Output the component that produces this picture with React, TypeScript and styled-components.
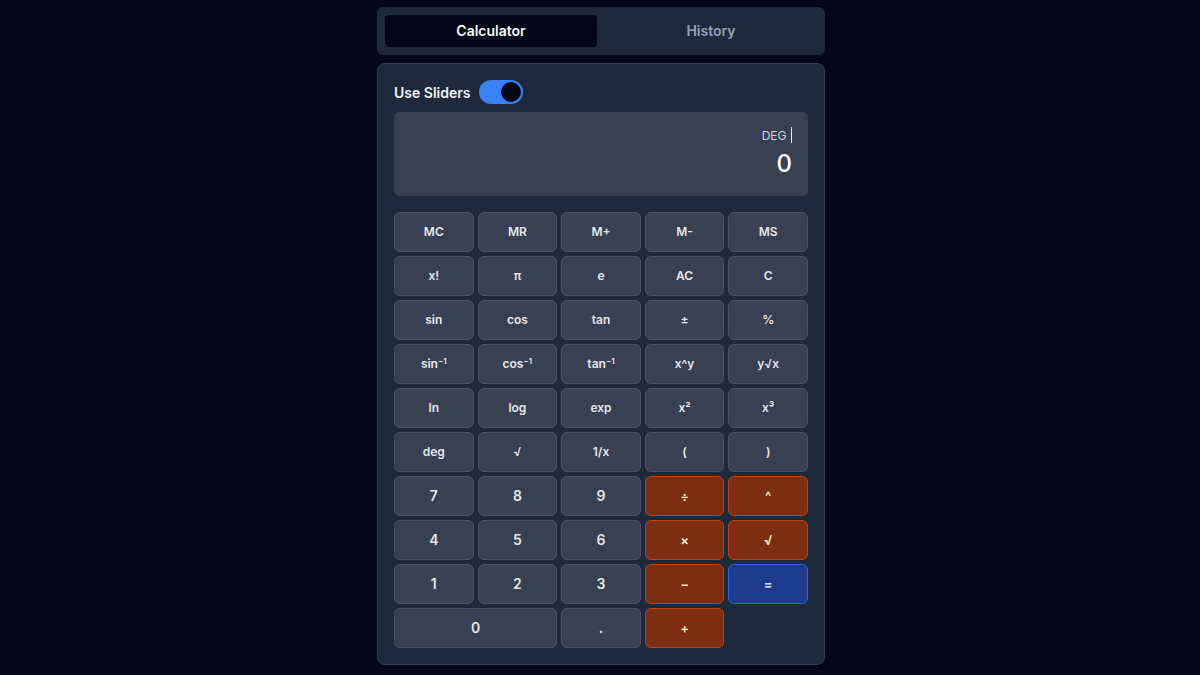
import React, { useState } from "react";
import styled, { createGlobalStyle, css } from "styled-components";

const GlobalStyle = createGlobalStyle`
  html, body {
    margin: 0;
    padding: 0;
    background: #020817;
    font-family: Inter, "Noto Sans", "Liberation Sans", sans-serif;
    color: #f8fafc;
  }
  * {
    box-sizing: border-box;
  }
`;

const Page = styled.div`
  min-height: 675px;
  display: flex;
  justify-content: center;
  padding: 7px 0 0 2px;
`;

const Column = styled.div`
  width: 448px;
  display: flex;
  flex-direction: column;
  gap: 8px;
`;

const TabList = styled.div`
  display: grid;
  grid-template-columns: 1fr 1fr;
  gap: 8px;
  padding: 8px;
  height: 48px;
  background: #1e293b;
  border-radius: 6px;
`;

const Tab = styled.button<{ $active?: boolean }>`
  border: none;
  border-radius: 4px;
  padding: 0 0 2px;
  font-family: inherit;
  font-size: 14px;
  font-weight: 600;
  cursor: pointer;
  background: ${(p) => (p.$active ? "#020817" : "transparent")};
  color: ${(p) => (p.$active ? "#f8fafc" : "#94a3b8")};
`;

const Card = styled.div`
  background: #1e293b;
  border: 1px solid #334155;
  border-radius: 8px;
  padding: 16px;
  display: flex;
  flex-direction: column;
`;

const SliderRow = styled.div`
  display: flex;
  align-items: center;
  gap: 8px;
  height: 24px;
  font-size: 14px;
  font-weight: 600;
  color: #f1f5f9;
`;

const Switch = styled.button<{ $on: boolean }>`
  position: relative;
  width: 44px;
  height: 24px;
  border-radius: 12px;
  border: 2px solid transparent;
  padding: 0;
  cursor: pointer;
  background: ${(p) => (p.$on ? "#3b82f6" : "#475569")};
`;

const Thumb = styled.span<{ $on: boolean }>`
  position: absolute;
  top: 0;
  left: ${(p) => (p.$on ? "20px" : "0")};
  width: 20px;
  height: 20px;
  border-radius: 50%;
  background: #020817;
`;

const Display = styled.div`
  margin-top: 8px;
  height: 84px;
  background: #374151;
  border-radius: 6px;
  padding: 14px 16px;
  display: flex;
  flex-direction: column;
  align-items: flex-end;
`;

const Mode = styled.div`
  font-size: 12px;
  color: #cbd5e1;
  display: flex;
  align-items: center;
  gap: 4px;
  height: 18px;
`;

const Caret = styled.span`
  width: 1.5px;
  height: 16px;
  background: #e2e8f0;
`;

const Value = styled.div`
  margin-top: 5px;
  font-size: 24px;
  font-weight: 500;
  color: #f8fafc;
`;

const Keys = styled.div`
  margin-top: 16px;
  display: grid;
  grid-template-columns: repeat(5, 1fr);
  grid-auto-rows: 40px;
  gap: 4px;
`;

type Tone = "plain" | "op" | "eq";

const toneStyles = {
  plain: css`
    background: #374151;
    border-color: #4b5563;
    color: #e5e7eb;
  `,
  op: css`
    background: #7c2d12;
    border-color: #c2410c;
    color: #fef3c7;
    font-size: 13px;
  `,
  eq: css`
    background: #1e3a8a;
    border-color: #2563eb;
    color: #dbeafe;
    font-size: 13px;
  `,
};

const Key = styled.button<{ $tone: Tone; $wide?: boolean; $big?: boolean }>`
  border: 1px solid;
  border-radius: 6px;
  padding: 0 0 1px;
  font-family: inherit;
  font-size: ${(p) => (p.$big ? "14px" : "12px")};
  font-weight: 600;
  cursor: pointer;
  grid-column: ${(p) => (p.$wide ? "span 2" : "auto")};
  ${(p) => toneStyles[p.$tone]}
`;

const Sup = styled.sup`
  font-size: 8px;
  vertical-align: 4px;
  line-height: 0;
`;

type KeyDef = { label: React.ReactNode; tone?: Tone; wide?: boolean; big?: boolean };

const inv = (s: string) => (
  <>
    {s}
    <Sup>−1</Sup>
  </>
);

const keys: KeyDef[] = [
  { label: "MC" }, { label: "MR" }, { label: "M+" }, { label: "M-" }, { label: "MS" },
  { label: "x!" }, { label: "π" }, { label: "e" }, { label: "AC" }, { label: "C" },
  { label: "sin" }, { label: "cos" }, { label: "tan" }, { label: "±" }, { label: "%" },
  { label: inv("sin") }, { label: inv("cos") }, { label: inv("tan") }, { label: "x^y" }, { label: "y√x" },
  { label: "ln" }, { label: "log" }, { label: "exp" }, { label: "x²" }, { label: "x³" },
  { label: "deg" }, { label: "√" }, { label: "1/x" }, { label: "(" }, { label: ")" },
  { label: "7", big: true }, { label: "8", big: true }, { label: "9", big: true }, { label: "÷", tone: "op" }, { label: "^", tone: "op" },
  { label: "4", big: true }, { label: "5", big: true }, { label: "6", big: true }, { label: "×", tone: "op" }, { label: "√", tone: "op" },
  { label: "1", big: true }, { label: "2", big: true }, { label: "3", big: true }, { label: "−", tone: "op" }, { label: "=", tone: "eq" },
  { label: "0", big: true, wide: true }, { label: ".", big: true }, { label: "+", tone: "op" },
];

export default function App() {
  const [tab, setTab] = useState<"calc" | "history">("calc");
  const [sliders, setSliders] = useState(true);

  return (
    <>
      <GlobalStyle />
      <Page>
        <Column>
          <TabList>
            <Tab $active={tab === "calc"} onClick={() => setTab("calc")}>
              Calculator
            </Tab>
            <Tab $active={tab === "history"} onClick={() => setTab("history")}>
              History
            </Tab>
          </TabList>
          <Card>
            <SliderRow>
              Use Sliders
              <Switch $on={sliders} onClick={() => setSliders(!sliders)}>
                <Thumb $on={sliders} />
              </Switch>
            </SliderRow>
            <Display>
              <Mode>
                DEG <Caret />
              </Mode>
              <Value>0</Value>
            </Display>
            <Keys>
              {keys.map((k, i) => (
                <Key key={i} $tone={k.tone ?? "plain"} $wide={k.wide} $big={k.big}>
                  {k.label}
                </Key>
              ))}
            </Keys>
          </Card>
        </Column>
      </Page>
    </>
  );
}
